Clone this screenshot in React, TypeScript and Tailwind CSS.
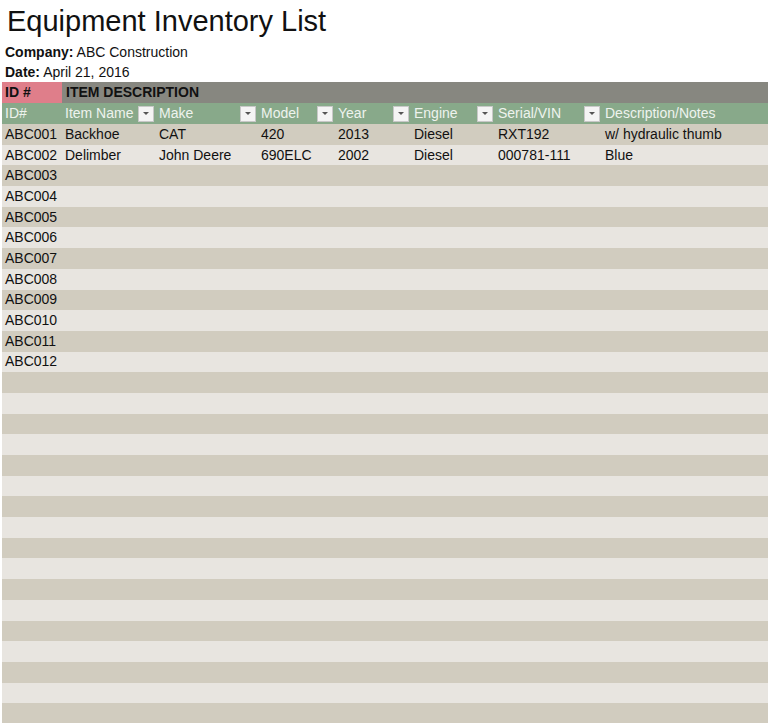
const cols = ["w-[60px]", "w-[94px]", "w-[102px]", "w-[77px]", "w-[76px]", "w-[84px]", "w-[107px]", "flex-1"];
const heads = ["ID#", "Item Name", "Make", "Model", "Year", "Engine", "Serial/VIN", "Description/Notes"];
const data = [
  ["ABC001", "Backhoe", "CAT", "420", "2013", "Diesel", "RXT192", "w/ hydraulic thumb"],
  ["ABC002", "Delimber", "John Deere", "690ELC", "2002", "Diesel", "000781-111", "Blue"],
];

function Drop() {
  return (
    <span className="ml-auto mr-[2px] flex h-[16px] w-[16px] shrink-0 items-center justify-center border border-[#c8c8c8] bg-[#f4f4f4]">
      <span className="h-0 w-0 border-x-[3px] border-t-[3px] border-x-transparent border-t-[#555]" />
    </span>
  );
}

export default function App() {
  const rows = Array.from({ length: 29 }, (_, i) =>
    i < 2 ? data[i] : i < 12 ? ["ABC" + String(i + 1).padStart(3, "0")] : []
  );
  return (
    <div className="h-[723px] overflow-hidden bg-white pl-[2px] font-[family-name:Liberation_Sans,Arial,sans-serif] text-[14px] text-[#111]">
      <div className="h-[42px] pl-[5px] pt-[2px] text-[29px] leading-[38px]">Equipment Inventory List</div>
      <div className="h-[20px] pl-[3px] leading-[20px]"><b>Company:</b> ABC Construction</div>
      <div className="h-[20px] pl-[3px] leading-[20px]"><b>Date:</b> April 21, 2016</div>
      <div className="flex h-[21px] items-center bg-[#878780] font-bold">
        <div className="flex h-full w-[60px] items-center bg-[#df7e8a] pl-[3px]">ID #</div>
        <div className="pl-[4px]">ITEM DESCRIPTION</div>
      </div>
      <div className="flex h-[21px] items-center bg-[#88a98a] text-[#eef3ee]">
        {heads.map((h, i) => (
          <div key={h} className={`${cols[i]} flex h-full items-center overflow-hidden whitespace-nowrap pl-[3px]`}>
            {h}
            {i > 0 && i < 7 && <Drop />}
          </div>
        ))}
      </div>
      {rows.map((r, ri) => (
        <div key={ri} className={`flex h-[20.7px] items-center ${ri % 2 === 0 ? "bg-[#d1ccbf]" : "bg-[#e8e5e0]"}`}>
          {cols.map((c, ci) => (
            <div key={ci} className={`${c} whitespace-nowrap pl-[3px]`}>{r[ci] ?? ""}</div>
          ))}
        </div>
      ))}
    </div>
  );
}
